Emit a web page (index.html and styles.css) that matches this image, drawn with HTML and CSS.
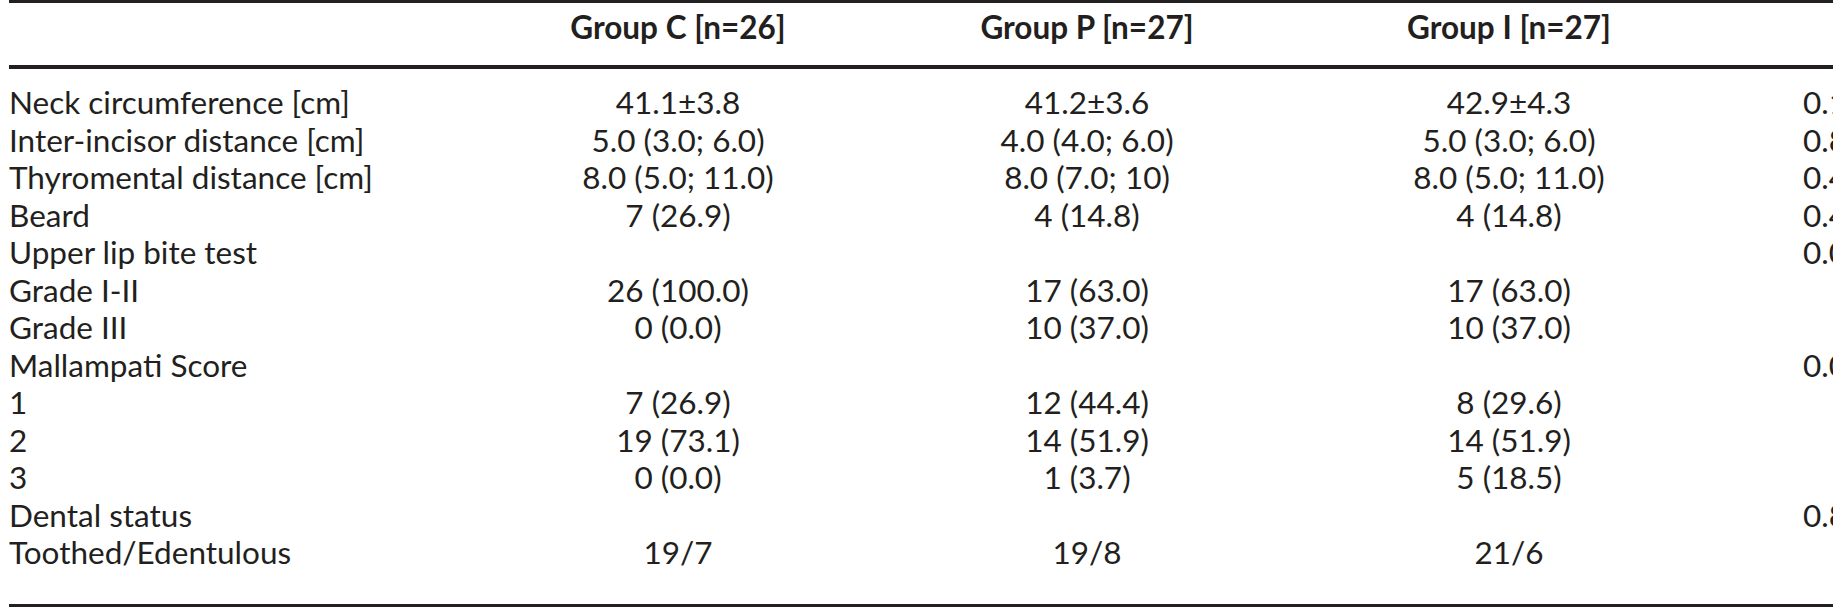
FILE: index.html
```html
<!DOCTYPE html>
<html lang="en">
<head>
<meta charset="utf-8">
<title>Airway assessment by group</title>
<link rel="stylesheet" href="styles.css">
</head>
<body>
<table class="data-table">
  <colgroup>
    <col class="col-label">
    <col class="col-c">
    <col class="col-p">
    <col class="col-i">
    <col class="col-pval">
  </colgroup>
  <thead>
    <tr>
      <th class="label"></th>
      <th>Group C [n=26]</th>
      <th>Group P [n=27]</th>
      <th>Group I [n=27]</th>
      <th class="pval"></th>
    </tr>
  </thead>
  <tbody>
    <tr><td class="label">Neck circumference [cm]</td><td>41.1±3.8</td><td>41.2±3.6</td><td>42.9±4.3</td><td class="pval">0.151</td></tr>
    <tr><td class="label">Inter-incisor distance [cm]</td><td>5.0 (3.0; 6.0)</td><td>4.0 (4.0; 6.0)</td><td>5.0 (3.0; 6.0)</td><td class="pval">0.815</td></tr>
    <tr><td class="label">Thyromental distance [cm]</td><td>8.0 (5.0; 11.0)</td><td>8.0 (7.0; 10)</td><td>8.0 (5.0; 11.0)</td><td class="pval">0.466</td></tr>
    <tr><td class="label">Beard</td><td>7 (26.9)</td><td>4 (14.8)</td><td>4 (14.8)</td><td class="pval">0.481</td></tr>
    <tr><td class="label">Upper lip bite test</td><td></td><td></td><td></td><td class="pval">0.001</td></tr>
    <tr><td class="label">Grade I-II</td><td>26 (100.0)</td><td>17 (63.0)</td><td>17 (63.0)</td><td class="pval"></td></tr>
    <tr><td class="label">Grade III</td><td>0 (0.0)</td><td>10 (37.0)</td><td>10 (37.0)</td><td class="pval"></td></tr>
    <tr><td class="label">Mallampati Score</td><td></td><td></td><td></td><td class="pval">0.038</td></tr>
    <tr><td class="label">1</td><td>7 (26.9)</td><td>12 (44.4)</td><td>8 (29.6)</td><td class="pval"></td></tr>
    <tr><td class="label">2</td><td>19 (73.1)</td><td>14 (51.9)</td><td>14 (51.9)</td><td class="pval"></td></tr>
    <tr><td class="label">3</td><td>0 (0.0)</td><td>1 (3.7)</td><td>5 (18.5)</td><td class="pval"></td></tr>
    <tr><td class="label">Dental status</td><td></td><td></td><td></td><td class="pval">0.826</td></tr>
    <tr><td class="label">Toothed/Edentulous</td><td>19/7</td><td>19/8</td><td>21/6</td><td class="pval"></td></tr>
  </tbody>
</table>
</body>
</html>
```

FILE: styles.css
```css
html, body {
  margin: 0;
  padding: 0;
  overflow: hidden;
  background: #ffffff;
}

body {
  font-family: Lato, "Open Sans", "Liberation Sans", sans-serif;
  font-size: 31.5px;
  color: #231f20;
}

.data-table {
  margin-left: 9px;
  width: 2021px;
  table-layout: fixed;
  border-collapse: collapse;
  border-top: 3px solid #231f20;
  border-bottom: 3px solid #231f20;
}

.col-label { width: 461px; }
.col-c { width: 416px; }
.col-p { width: 402px; }
.col-i { width: 442px; }
.col-pval { width: 300px; }

.data-table th,
.data-table td {
  padding: 0;
  line-height: 37.5px;
  white-space: nowrap;
  text-align: center;
  vertical-align: top;
}

.data-table thead th {
  font-weight: 700;
  padding-top: 6px;
  padding-bottom: 18.5px;
  border-bottom: 4px solid #231f20;
}

.data-table tbody tr:first-child td {
  padding-top: 15px;
}

.data-table tbody tr:last-child td {
  padding-bottom: 32px;
}

.data-table .label {
  text-align: left;
}

.data-table .pval {
  text-align: left;
  padding-left: 73px;
}
```
